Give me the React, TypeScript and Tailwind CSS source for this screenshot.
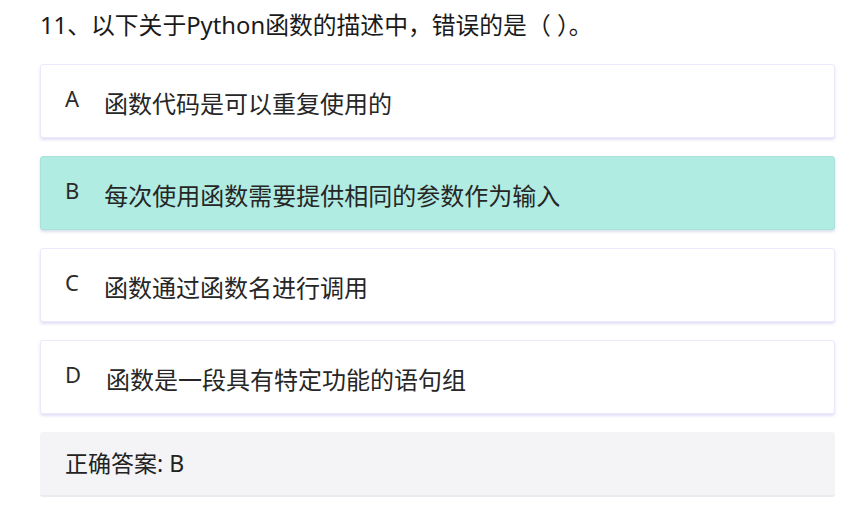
const options = [
  { key: "A", text: "函数代码是可以重复使用的" },
  { key: "B", text: "每次使用函数需要提供相同的参数作为输入", active: true },
  { key: "C", text: "函数通过函数名进行调用" },
  { key: "D", text: "函数是一段具有特定功能的语句组" },
];

export default function App() {
  return (
    <div
      className="min-h-screen bg-white pl-[40px] pt-[8px] text-[#222]"
      style={{ fontFamily: '"Noto Sans", "Noto Sans CJK SC", sans-serif' }}
    >
      <h1 className="text-[23.8px] leading-[34px] font-normal text-[#1a1a1a]">
        11、以下关于Python函数的描述中，错误的是（ ）。
      </h1>

      <div className="mt-[22px] flex w-[795px] flex-col gap-[18px]">
        {options.map((o) => (
          <div
            key={o.key}
            className={
              o.active
                ? "flex h-[74px] items-start gap-[25px] rounded-[3px] border border-[#a9e0dc] bg-[#b1ece2] pl-[24px] pt-[21px] shadow-[0_2px_3px_rgba(150,170,200,0.35)]"
                : "flex h-[74px] items-start gap-[25px] rounded-[3px] border border-[#ebe9fb] bg-white pl-[24px] pt-[21px] shadow-[0_2px_3px_rgba(170,165,225,0.35)]"
            }
          >
            <span className="text-[22px] leading-[24px] text-[#2b2b2b]">{o.key}</span>
            <span className="mt-[1px] text-[24px] leading-[34px] text-[#262626]">{o.text}</span>
          </div>
        ))}

        <div className="flex h-[65px] items-center rounded-[3px] border-b-2 border-[#e8ebef] bg-[#f4f4f6] pl-[25px] text-[23px] text-[#222]">
          正确答案: B
        </div>
      </div>
    </div>
  );
}
